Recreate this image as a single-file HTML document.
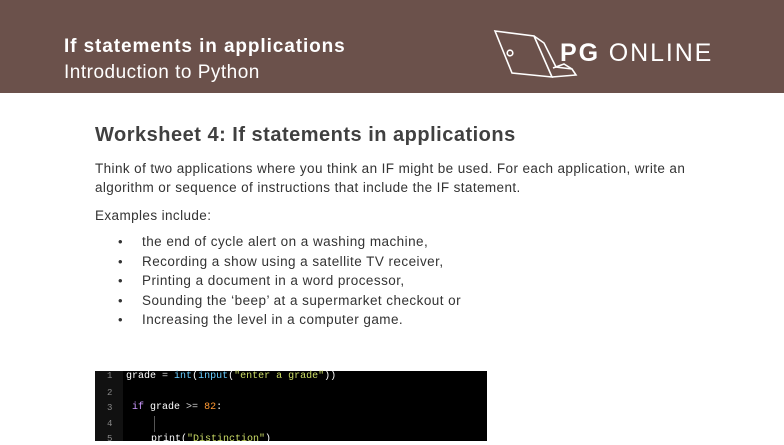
<!DOCTYPE html>
<html><head><style>
*{margin:0;padding:0;box-sizing:border-box}
body{width:784px;height:441px;overflow:hidden;background:#fff;font-family:"Liberation Sans",sans-serif;position:relative}
.hdr{position:absolute;left:0;top:0;width:784px;height:93px;background:#6b514b}
.t1{position:absolute;left:64px;top:36px;color:#fff;font-size:19px;font-weight:bold;letter-spacing:0.9px}
.t2{position:absolute;left:64px;top:62px;color:#fff;font-size:19px;letter-spacing:0.5px}
.logo{position:absolute;left:560px;top:39px;color:#fff;font-size:25px;letter-spacing:1.9px}
h1{position:absolute;left:95px;top:124px;font-size:20px;color:#404040;font-weight:bold;letter-spacing:0.5px}
.p{position:absolute;left:95px;font-size:13.5px;color:#333;line-height:19px;letter-spacing:0.4px}
ul{position:absolute;left:118px;top:234px;list-style:none;font-size:13.5px;color:#333;letter-spacing:0.45px}
li{height:19.5px;position:relative;padding-left:24px}
li:before{content:"•";position:absolute;left:0;font-size:13px}
.code{position:absolute;left:95px;top:371px;width:392px;height:70px;background:#000;font-family:"Liberation Mono",monospace;font-size:10px}
.g{position:absolute;left:0;top:0;width:28px;height:70px;background:#111}
.ln{position:absolute;left:12px;color:#888;font-size:9px}
.c{position:absolute;white-space:pre;color:#fff}
</style></head><body>
<div class="hdr"></div>
<div class="t1">If statements in applications</div>
<div class="t2">Introduction to Python</div>
<svg style="position:absolute;left:492px;top:27px" width="88" height="55" viewBox="0 0 88 55" fill="none" stroke="#fff" stroke-width="1.6">
<path d="M3 4 L42 9 L60 50 L20 46 Z"/><circle cx="18" cy="26" r="2.8"/>
<path d="M42 9 L52 16 L64 40 L80 42 L84 48 L60 50"/><path d="M61 41 L72 37 L80 42"/>
</svg>
<div class="logo"><b>PG</b> ONLINE</div>
<h1>Worksheet 4: If statements in applications</h1>
<div class="p" style="top:159px">Think of two applications where you think an IF might be used. For each application, write an<br>algorithm or sequence of instructions that include the IF statement.</div>
<div class="p" style="top:206px">Examples include:</div>
<ul>
<li>the end of cycle alert on a washing machine,</li>
<li>Recording a show using a satellite TV receiver,</li>
<li>Printing a document in a word processor,</li>
<li>Sounding the ‘beep’ at a supermarket checkout or</li>
<li>Increasing the level in a computer game.</li>
</ul>
<div class="code"><div class="g"></div>
<div class="ln" style="top:0">1</div><div class="ln" style="top:17px">2</div><div class="ln" style="top:32px">3</div><div class="ln" style="top:48px">4</div><div class="ln" style="top:63px">5</div>
<div class="c" style="left:31px;top:0">grade <span style="color:#ccc">=</span> <span style="color:#6cf">int</span>(<span style="color:#6cf">input</span>(<span style="color:#cd6">"enter a grade"</span>))</div>
<div class="c" style="left:37px;top:31px"><span style="color:#c9f">if</span> grade <span style="color:#ccc">&gt;=</span> <span style="color:#f93">82</span>:</div>
<div style="position:absolute;left:59px;top:45px;width:1px;height:16px;background:#555"></div>
<div class="c" style="left:56px;top:63px">print(<span style="color:#cd6">"Distinction"</span>)</div>
</div>
</body></html>
